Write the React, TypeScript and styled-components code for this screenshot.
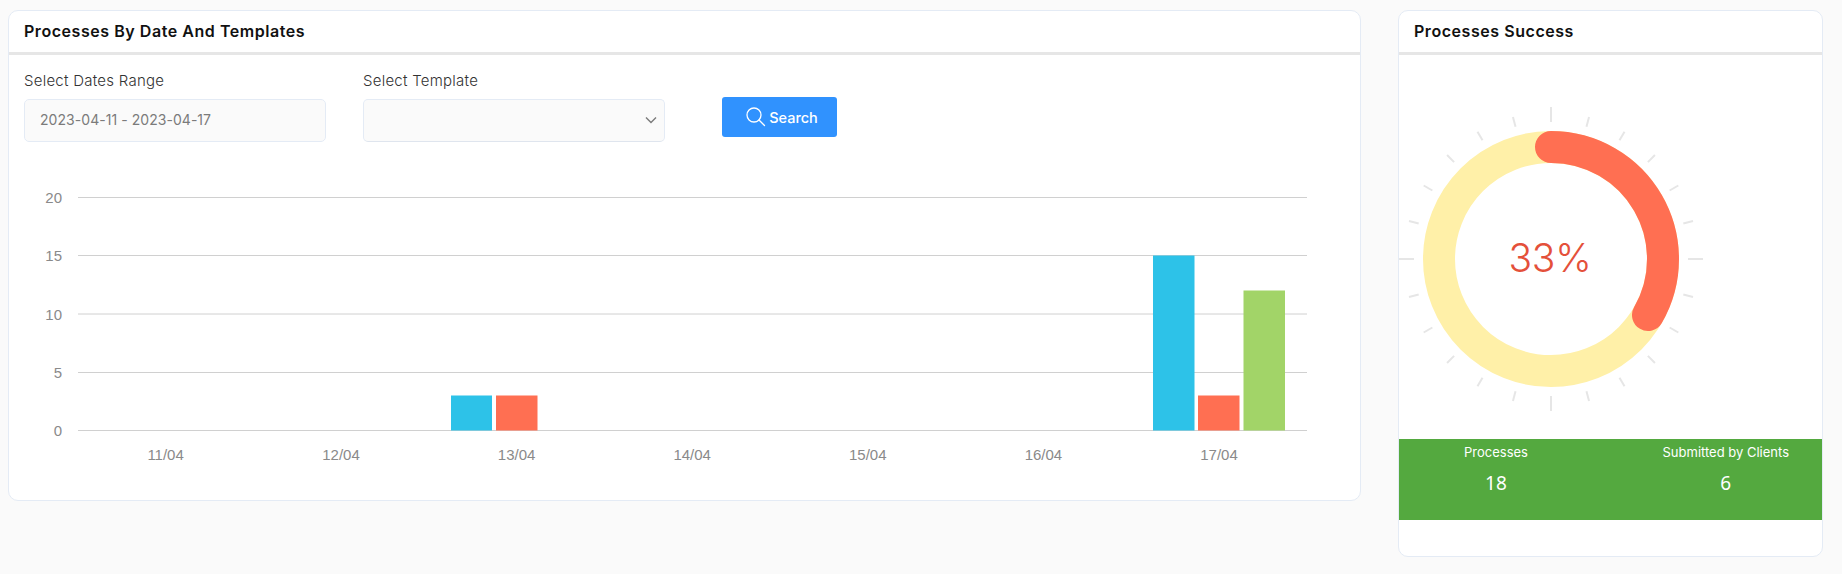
import React from 'react';
import styled, { createGlobalStyle } from 'styled-components';

const Global = createGlobalStyle`
  html, body { margin: 0; padding: 0; background: #fafafa; }
  body { font-family: Inter, "Liberation Sans", sans-serif; }
`;

const Page = styled.div`
  display: flex;
  align-items: flex-start;
  gap: 37px;
  padding: 10px 18px 0 8px;
  height: 564px;
  overflow: hidden;
`;

const Card = styled.section<{ $width: number; $height: number }>`
  box-sizing: border-box;
  flex: none;
  width: ${p => p.$width}px;
  height: ${p => p.$height}px;
  background: #fff;
  border: 1px solid #e4ebf5;
  border-radius: 10px;
  overflow: hidden;
`;

const CardHeader = styled.header`
  box-sizing: border-box;
  height: 44px;
  padding: 0 15px 2px;
  display: flex;
  align-items: center;
  border-bottom: 3px solid #e6e6e6;
`;

const CardTitle = styled.h2`
  margin: 0;
  font-size: 16px;
  font-weight: 600;
  letter-spacing: 0.55px;
  color: #111;
`;

const FilterRow = styled.div`
  display: flex;
  align-items: flex-start;
  padding: 17px 15px 0 15px;
  height: 83px;
  box-sizing: content-box;
`;

const Field = styled.label<{ $width: number; $gap: number }>`
  display: flex;
  flex-direction: column;
  flex: none;
  width: ${p => p.$width}px;
  margin-right: ${p => p.$gap}px;
  gap: 10px;
  font-size: 15px;
  font-weight: 300;
  letter-spacing: 0.25px;
  line-height: 17px;
  color: #333;
`;

const DateInput = styled.div`
  box-sizing: border-box;
  height: 43px;
  padding: 0 15px 2px;
  display: flex;
  align-items: center;
  background: #fafafa;
  border: 1px solid #e4ebf5;
  border-radius: 5px;
  font-size: 14px;
  font-weight: 400;
  letter-spacing: 0.05px;
  color: #7b7b7b;
`;

const SelectWrap = styled.div`
  position: relative;
  height: 43px;
`;

const TemplateSelect = styled.select`
  box-sizing: border-box;
  width: 100%;
  height: 100%;
  appearance: none;
  background: #fafafa;
  border: 1px solid #e4ebf5;
  border-bottom-color: #dfe5ee;
  border-radius: 5px;
`;

const Chevron = styled.svg`
  position: absolute;
  right: 8px;
  top: 17px;
  pointer-events: none;
`;

const SearchButton = styled.button`
  flex: none;
  box-sizing: border-box;
  margin-top: 25px;
  width: 115px;
  height: 40px;
  display: flex;
  align-items: center;
  justify-content: center;
  gap: 2px;
  padding: 0 0 0 4px;
  background: #3092fe;
  border: none;
  border-radius: 3px;
  color: #fff;
  font-family: inherit;
  font-size: 14.5px;
  font-weight: 500;
`;

const ChartSvg = styled.svg`
  display: block;
  font-family: "Liberation Sans", Arial, sans-serif;
`;

const GaugeArea = styled.div`
  height: 384px;
`;

const GaugeSvg = styled.svg`
  display: block;
`;

const StatsBand = styled.div`
  box-sizing: border-box;
  height: 81px;
  display: flex;
  justify-content: space-between;
  padding: 5px 33px 0 65px;
  background: #54a93f;
  color: #fff;
`;

const Stat = styled.div`
  display: flex;
  flex-direction: column;
  align-items: center;
  gap: 9px;
`;

const StatLabel = styled.div`
  font-size: 13px;
  line-height: 17px;
`;

const StatValue = styled.div`
  font-family: "Noto Sans", "Open Sans", sans-serif;
  font-size: 19px;
  line-height: 26px;
`;

const GRID = [
  { y: 197.5, label: '20' },
  { y: 255.5, label: '15' },
  { y: 314, label: '10' },
  { y: 372.5, label: '5' },
  { y: 430.5, label: '0' },
];

const CATEGORIES = [
  { x: 165.6, label: '11/04' },
  { x: 341, label: '12/04' },
  { x: 516.6, label: '13/04' },
  { x: 692.2, label: '14/04' },
  { x: 867.8, label: '15/04' },
  { x: 1043.4, label: '16/04' },
  { x: 1219, label: '17/04' },
];

const BARS = [
  { x: 451, w: 41, top: 395.5, fill: '#2dc2e8' },
  { x: 496, w: 41.5, top: 395.5, fill: '#ff6f52' },
  { x: 1153, w: 41.5, top: 255.5, fill: '#2dc2e8' },
  { x: 1198, w: 41.5, top: 395.5, fill: '#ff6f52' },
  { x: 1243.5, w: 41.5, top: 290.5, fill: '#a2d468' },
];

// The chart is drawn in page coordinates: svg origin is the card's content corner.
const ORIGIN_X = 9;
const ORIGIN_Y = 155;

function BarChart() {
  return (
    <ChartSvg width={1351} height={345} viewBox={`${ORIGIN_X} ${ORIGIN_Y} 1351 345`}>
      {GRID.map(g => (
        <g key={g.label}>
          <line x1={78} x2={1307} y1={g.y} y2={g.y} stroke="#d0d0d0" strokeWidth={1} />
          <text x={62} y={g.y + 5.5} textAnchor="end" fontSize={15} fill="#8a8a8a">{g.label}</text>
        </g>
      ))}
      {BARS.map(b => (
        <rect key={b.x} x={b.x} y={b.top} width={b.w} height={430.5 - b.top} fill={b.fill} />
      ))}
      {CATEGORIES.map(c => (
        <text key={c.label} x={c.x} y={460} textAnchor="middle" fontSize={15} fill="#8a8a8a">{c.label}</text>
      ))}
    </ChartSvg>
  );
}

function Gauge() {
  const cx = 152;
  const cy = 204;
  const r = 112;
  const ticks = Array.from({ length: 24 }, (_, i) => i * 15);
  const end = (120 * Math.PI) / 180;
  const ex = cx + r * Math.sin(end);
  const ey = cy - r * Math.cos(end);
  return (
    <GaugeSvg width={423} height={384} viewBox="0 0 423 384">
      {ticks.map(a => {
        const rad = (a * Math.PI) / 180;
        const outer = a % 90 === 0 ? 152 : 147;
        return (
          <line
            key={a}
            x1={cx + 137 * Math.sin(rad)}
            y1={cy - 137 * Math.cos(rad)}
            x2={cx + outer * Math.sin(rad)}
            y2={cy - outer * Math.cos(rad)}
            stroke="#e6e6e6"
            strokeWidth={2}
          />
        );
      })}
      <circle cx={cx} cy={cy} r={r} fill="none" stroke="#fff0a8" strokeWidth={32} />
      <path
        d={`M ${cx} ${cy - r} A ${r} ${r} 0 0 1 ${ex} ${ey}`}
        fill="none"
        stroke="#ff6f52"
        strokeWidth={32}
        strokeLinecap="round"
      />
      <text x={cx - 1} y={cy + 12.5} textAnchor="middle" fontFamily="Inter, sans-serif" fontWeight={340} fontSize={39} letterSpacing={-0.3} fill="#e4503a">33%</text>
    </GaugeSvg>
  );
}

export default function App() {
  return (
    <>
      <Global />
      <Page>
        <Card $width={1353} $height={491}>
          <CardHeader>
            <CardTitle>Processes By Date And Templates</CardTitle>
          </CardHeader>
          <FilterRow>
            <Field $width={302} $gap={37}>
              Select Dates Range
              <DateInput>2023-04-11 - 2023-04-17</DateInput>
            </Field>
            <Field $width={302} $gap={57}>
              Select Template
              <SelectWrap>
                <TemplateSelect aria-label="Select Template"><option value=""></option></TemplateSelect>
                <Chevron width="12" height="8" viewBox="0 0 12 8">
                  <path d="M1 1.5 L6 6.5 L11 1.5" fill="none" stroke="#7a7a7a" strokeWidth="1.4" />
                </Chevron>
              </SelectWrap>
            </Field>
            <SearchButton type="button">
              <svg width="22" height="22" viewBox="0 0 22 22" fill="none" stroke="#fff" strokeWidth="1.3">
                <circle cx="9" cy="9" r="7" />
                <path d="M14 14 L19.5 19.5" strokeLinecap="round" />
              </svg>
              Search
            </SearchButton>
          </FilterRow>
          <BarChart />
        </Card>
        <Card $width={425} $height={547}>
          <CardHeader>
            <CardTitle>Processes Success</CardTitle>
          </CardHeader>
          <GaugeArea>
            <Gauge />
          </GaugeArea>
          <StatsBand>
            <Stat>
              <StatLabel>Processes</StatLabel>
              <StatValue>18</StatValue>
            </Stat>
            <Stat>
              <StatLabel>Submitted by Clients</StatLabel>
              <StatValue>6</StatValue>
            </Stat>
          </StatsBand>
        </Card>
      </Page>
    </>
  );
}
